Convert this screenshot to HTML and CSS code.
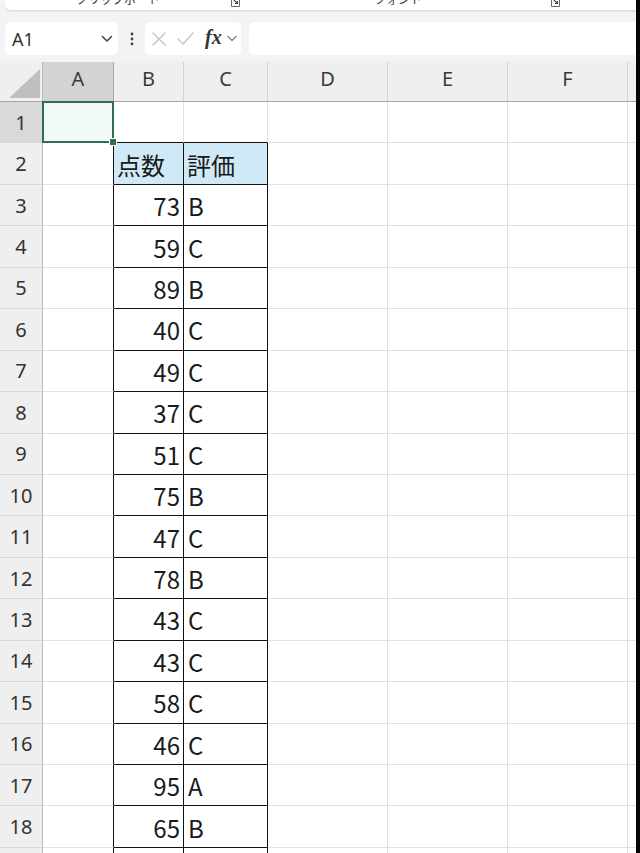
FILE: index.html
```html
<!DOCTYPE html>
<html lang="ja">
<head>
<meta charset="utf-8">
<title>Excel</title>
<link rel="stylesheet" href="styles.css">
</head>
<body>
<div class="app">
  <div class="main">
    <div class="ribbon">
      <div class="panel">
        <div class="group g1">
          <span class="glabel">クリップボード</span>
          <svg class="launch" width="9" height="7" viewBox="0 0 9 7"><path d="M0.5 0 V6.5 H8.5 V0" fill="none" stroke="#666" stroke-width="1"/><path d="M3 0 L6.5 3.5 M6.5 1 V3.5 H4" fill="none" stroke="#444" stroke-width="1.1"/></svg>
        </div>
        <div class="group g2">
          <span class="glabel">フォント</span>
          <svg class="launch" width="9" height="7" viewBox="0 0 9 7"><path d="M0.5 0 V6.5 H8.5 V0" fill="none" stroke="#666" stroke-width="1"/><path d="M3 0 L6.5 3.5 M6.5 1 V3.5 H4" fill="none" stroke="#444" stroke-width="1.1"/></svg>
        </div>
      </div>
    </div>
    <div class="fbar">
      <div class="namebox">
        <span class="nbtext">A1</span>
        <svg class="chev" width="12" height="8" viewBox="0 0 12 8"><path d="M1.5 1.5 L6 6 L10.5 1.5" fill="none" stroke="#444" stroke-width="1.5" stroke-linecap="round" stroke-linejoin="round"/></svg>
      </div>
      <div class="kebab">
        <svg width="4" height="14" viewBox="0 0 4 14"><circle cx="2" cy="2" r="1.4" fill="#444"/><circle cx="2" cy="7" r="1.4" fill="#444"/><circle cx="2" cy="12" r="1.4" fill="#444"/></svg>
      </div>
      <div class="fbtns">
        <svg class="ico-x" width="14" height="14" viewBox="0 0 14 14"><path d="M1 1 L13 13 M13 1 L1 13" stroke="#c4c4c4" stroke-width="1.4" stroke-linecap="round"/></svg>
        <svg class="ico-ok" width="17" height="13" viewBox="0 0 17 13"><path d="M1 7 L6 12 L16 1" fill="none" stroke="#c4c4c4" stroke-width="1.4" stroke-linecap="round" stroke-linejoin="round"/></svg>
        <span class="fx">fx</span>
        <svg class="chev2" width="10" height="7" viewBox="0 0 10 7"><path d="M1 1.5 L5 5.5 L9 1.5" fill="none" stroke="#888" stroke-width="1.3" stroke-linecap="round" stroke-linejoin="round"/></svg>
      </div>
      <div class="finput"></div>
    </div>
    <div class="sheet">
      <div class="corner"><svg width="31" height="29" viewBox="0 0 31 29"><path d="M31 0 V29 H0 Z" fill="#bfbfbf"/></svg></div>
      <div class="ch selc">A</div><div class="ch">B</div><div class="ch">C</div><div class="ch">D</div><div class="ch">E</div><div class="ch">F</div><div class="ch g"></div>

      <div class="rh selr">1</div><div class="c a1"></div><div class="c tt"></div><div class="c tt"></div><div class="c"></div><div class="c"></div><div class="c"></div><div class="c g"></div>
      <div class="rh">2</div><div class="c tl"></div><div class="c t th">点数</div><div class="c t th">評価</div><div class="c"></div><div class="c"></div><div class="c"></div><div class="c g"></div>
      <div class="rh">3</div><div class="c tl"></div><div class="c t num">73</div><div class="c t">B</div><div class="c"></div><div class="c"></div><div class="c"></div><div class="c g"></div>
      <div class="rh">4</div><div class="c tl"></div><div class="c t num">59</div><div class="c t">C</div><div class="c"></div><div class="c"></div><div class="c"></div><div class="c g"></div>
      <div class="rh">5</div><div class="c tl"></div><div class="c t num">89</div><div class="c t">B</div><div class="c"></div><div class="c"></div><div class="c"></div><div class="c g"></div>
      <div class="rh">6</div><div class="c tl"></div><div class="c t num">40</div><div class="c t">C</div><div class="c"></div><div class="c"></div><div class="c"></div><div class="c g"></div>
      <div class="rh">7</div><div class="c tl"></div><div class="c t num">49</div><div class="c t">C</div><div class="c"></div><div class="c"></div><div class="c"></div><div class="c g"></div>
      <div class="rh">8</div><div class="c tl"></div><div class="c t num">37</div><div class="c t">C</div><div class="c"></div><div class="c"></div><div class="c"></div><div class="c g"></div>
      <div class="rh">9</div><div class="c tl"></div><div class="c t num">51</div><div class="c t">C</div><div class="c"></div><div class="c"></div><div class="c"></div><div class="c g"></div>
      <div class="rh">10</div><div class="c tl"></div><div class="c t num">75</div><div class="c t">B</div><div class="c"></div><div class="c"></div><div class="c"></div><div class="c g"></div>
      <div class="rh">11</div><div class="c tl"></div><div class="c t num">47</div><div class="c t">C</div><div class="c"></div><div class="c"></div><div class="c"></div><div class="c g"></div>
      <div class="rh">12</div><div class="c tl"></div><div class="c t num">78</div><div class="c t">B</div><div class="c"></div><div class="c"></div><div class="c"></div><div class="c g"></div>
      <div class="rh">13</div><div class="c tl"></div><div class="c t num">43</div><div class="c t">C</div><div class="c"></div><div class="c"></div><div class="c"></div><div class="c g"></div>
      <div class="rh">14</div><div class="c tl"></div><div class="c t num">43</div><div class="c t">C</div><div class="c"></div><div class="c"></div><div class="c"></div><div class="c g"></div>
      <div class="rh">15</div><div class="c tl"></div><div class="c t num">58</div><div class="c t">C</div><div class="c"></div><div class="c"></div><div class="c"></div><div class="c g"></div>
      <div class="rh">16</div><div class="c tl"></div><div class="c t num">46</div><div class="c t">C</div><div class="c"></div><div class="c"></div><div class="c"></div><div class="c g"></div>
      <div class="rh">17</div><div class="c tl"></div><div class="c t num">95</div><div class="c t">A</div><div class="c"></div><div class="c"></div><div class="c"></div><div class="c g"></div>
      <div class="rh">18</div><div class="c tl"></div><div class="c t num">65</div><div class="c t">B</div><div class="c"></div><div class="c"></div><div class="c"></div><div class="c g"></div>
      <div class="rh">19</div><div class="c tl"></div><div class="c t num"></div><div class="c t"></div><div class="c"></div><div class="c"></div><div class="c"></div><div class="c g"></div>
      <div class="rh">20</div><div class="c tl"></div><div class="c t num"></div><div class="c t"></div><div class="c"></div><div class="c"></div><div class="c"></div><div class="c g"></div>
    </div>
  </div>
  <div class="edge"></div>
</div>
</body>
</html>
```

FILE: styles.css
```css
* { box-sizing: border-box; }
html, body { margin: 0; padding: 0; }
body {
  width: 640px;
  height: 853px;
  overflow: hidden;
  background: #f3f3f3;
  font-family: "Noto Sans", "Noto Sans CJK JP", sans-serif;
  color: #333;
}
.app {
  display: flex;
  width: 640px;
  height: 853px;
  overflow: hidden;
}
.main {
  width: 636px;
  display: flex;
  flex-direction: column;
  overflow: hidden;
}
.edge {
  width: 4px;
  background: #050505;
}

/* ribbon remnant */
.ribbon {
  flex-shrink: 0;
  height: 12px;
  padding-left: 5px;
  background: #f3f3f3;
}
.panel {
  height: 11px;
  background: #fff;
  border-bottom: 1px solid #dedede;
  border-bottom-left-radius: 6px;
  box-shadow: 0 1px 2px rgba(0,0,0,0.08);
  display: flex;
  align-items: flex-start;
  overflow: hidden;
}
.group {
  display: grid;
  grid-template-columns: 1fr auto;
  grid-template-rows: 10px;
  align-items: end;
  height: 10px;
}
.g1 { width: 240px; }
.g2 { width: 320px; }
.glabel {
  justify-self: center;
  font-family: "Noto Sans CJK JP", sans-serif;
  font-size: 12px;
  line-height: 12px;
  color: #333;
  margin-bottom: 5px;
  white-space: nowrap;
}
.launch {
  align-self: start;
  margin-right: 5px;
}

/* formula bar */
.fbar {
  flex-shrink: 0;
  height: 50px;
  padding: 10px 0 7px 5px;
  display: flex;
  align-items: stretch;
  background: #f3f3f3;
}
.namebox {
  width: 113px;
  background: #fff;
  border-radius: 5px;
  display: flex;
  align-items: center;
  justify-content: space-between;
  padding: 0 5px 0 7px;
}
.nbtext {
  font-size: 18px;
  color: #333;
  line-height: 1;
}
.chev { margin-top: 1px; }
.kebab {
  width: 27px;
  display: flex;
  align-items: center;
  justify-content: center;
}
.fbtns {
  width: 96px;
  background: #fff;
  border-radius: 5px;
  display: flex;
  align-items: center;
  padding-left: 7px;
}
.ico-x { margin-right: 11px; }
.ico-ok { margin-right: 11px; }
.fx {
  font-family: "Liberation Serif", serif;
  font-style: italic;
  font-weight: bold;
  font-size: 20px;
  line-height: 1;
  color: #333;
  margin-right: 5px;
  margin-top: -3px;
}
.finput {
  flex: 1;
  margin-left: 8px;
  background: #fff;
  border-radius: 5px 0 0 5px;
}

/* sheet grid */
.sheet {
  flex-shrink: 0;
  display: grid;
  grid-template-columns: 43px 71px 70px 84px 120px 120px 120px 8px;
  grid-template-rows: 40px;
  grid-auto-rows: 41.44px;
  background: #fff;
}
.corner {
  background: #efefef;
  border-right: 1px solid #b8b8b8;
  border-bottom: 1px solid #a6a6a6;
  display: flex;
  align-items: flex-end;
  justify-content: flex-end;
  padding: 0 2px 3px 0;
}
.ch {
  background: #efefef;
  border-right: 1px solid #d2d2d2;
  border-bottom: 1px solid #a6a6a6;
  display: flex;
  align-items: center;
  justify-content: center;
  padding-bottom: 7px;
  font-size: 20px;
  color: #3a3a3a;
}
.ch.selc {
  background: #d3d3d3;
  border-right-color: #a9a9a9;
}
.ch.g { border-right: none; }
.rh {
  background: #efefef;
  border-right: 1px solid #b8b8b8;
  border-bottom: 1px solid #d8d8d8;
  display: flex;
  align-items: center;
  justify-content: center;
  font-size: 20px;
  color: #333;
}
.rh.selr { background: #d9d9d9; }
.c {
  border-right: 1px solid #e1e1e1;
  border-bottom: 1px solid #e1e1e1;
  display: flex;
  align-items: center;
  padding: 2px 4px 0 4px;
  font-family: "Noto Sans CJK JP", sans-serif;
  font-size: 24px;
  line-height: 1;
  color: #1a1a1a;
  white-space: nowrap;
}
.c.g { border-right: none; }
.c.tt { border-bottom-color: #111; }
.c.tl { border-right-color: #111; }
.c.t {
  border-right-color: #111;
  border-bottom-color: #111;
}
.c.th {
  background: #cfeaf6;
  padding-left: 3px;
}
.c.num {
  justify-content: flex-end;
  padding-right: 3px;
}
.c.a1 {
  position: relative;
  background: #f2faf7;
}
.c.a1::after {
  content: "";
  position: absolute;
  top: -1px;
  left: -1px;
  right: -1px;
  bottom: -1px;
  border: 2px solid #2f6f4f;
}
.c.a1::before {
  content: "";
  position: absolute;
  right: -4px;
  bottom: -4px;
  width: 6px;
  height: 6px;
  background: #2f6f4f;
  border: 1px solid #fff;
  z-index: 2;
}
```
